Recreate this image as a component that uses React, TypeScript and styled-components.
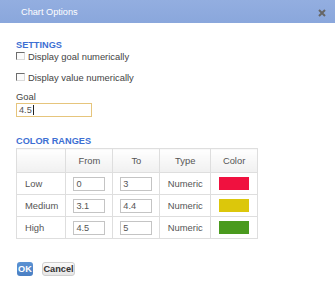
import React from 'react';
import styled, { createGlobalStyle } from 'styled-components';

const GlobalStyle = createGlobalStyle`
  html, body {
    margin: 0;
    padding: 0;
    background: #ffffff;
  }
  body {
    font-family: "Liberation Sans", Arial, sans-serif;
  }
`;

const Dialog = styled.div`
  width: 335px;
  height: 306px;
  background: #ffffff;
  display: flex;
  flex-direction: column;
  overflow: hidden;
`;

const TitleBar = styled.div`
  height: 23px;
  background: linear-gradient(#93aee0, #8aa7dc);
  display: flex;
  align-items: center;
  justify-content: space-between;
  padding: 0 9px 0 21px;
  color: #ffffff;
  font-size: 9.2px;
`;

const CloseBtn = styled.svg`
  width: 8px;
  height: 8px;
  margin-top: 2px;
`;

const Body = styled.div`
  padding: 16px 16px 0 16px;
  display: flex;
  flex-direction: column;
  align-items: flex-start;
`;

const SectionTitle = styled.div<{ $top?: number }>`
  margin-top: ${(p) => p.$top ?? 0}px;
  font-size: 9.2px;
  font-weight: bold;
  line-height: 12px;
  color: #3d6fd3;
`;

const CheckRow = styled.label<{ $top?: number }>`
  margin-top: ${(p) => p.$top ?? 0}px;
  display: flex;
  align-items: center;
  gap: 3px;
  height: 12px;
  font-size: 9.4px;
  color: #444;
`;

const Check = styled.span`
  width: 9px;
  height: 8px;
  box-sizing: border-box;
  border-top: 1px solid #6d6d6d;
  border-left: 1px solid #6d6d6d;
  border-right: 1px solid #dadada;
  border-bottom: 1px solid #dadada;
  background: #fbfbfb;
  margin-top: -1px;
`;

const Label = styled.div`
  margin-top: 8px;
  font-size: 9.4px;
  line-height: 12px;
  color: #444;
`;

const TextBox = styled.div<{ $w: number; $focus?: boolean }>`
  width: ${(p) => p.$w}px;
  height: 14px;
  box-sizing: border-box;
  border: 1px solid ${(p) => (p.$focus ? '#e6c57c' : '#c4c4c4')};
  padding-left: 2px;
  font-size: 9.2px;
  line-height: 12px;
  color: #555;
  text-align: left;
  display: flex;
  align-items: center;
  background: #fff;
`;

const Caret = styled.span`
  display: inline-block;
  width: 1px;
  height: 10px;
  background: #222;
  margin-left: 1px;
`;

const Table = styled.table`
  margin-top: 1px;
  border-collapse: collapse;
  width: 242px;
  font-size: 9.4px;
  color: #555;
`;

const Th = styled.th<{ $w: number }>`
  width: ${(p) => p.$w}px;
  height: 23px;
  padding: 0;
  border: 1px solid #dedede;
  background: linear-gradient(#ffffff, #f0f0f0);
  font-weight: normal;
  text-align: center;
`;

const Td = styled.td<{ $left?: boolean }>`
  height: 21px;
  padding: 0 0 0 ${(p) => (p.$left ? 8 : 0)}px;
  border: 1px solid #dedede;
  text-align: ${(p) => (p.$left ? 'left' : 'center')};
  vertical-align: middle;
`;

const CellInner = styled.div`
  display: flex;
  justify-content: center;
`;

const Swatch = styled.div<{ $c: string }>`
  width: 30px;
  height: 13px;
  margin: 0 auto;
  background: ${(p) => p.$c};
`;

const Buttons = styled.div`
  margin-top: 23px;
  display: flex;
  gap: 9px;
  padding-left: 1px;
`;

const OkButton = styled.button`
  width: 16px;
  height: 14px;
  padding: 0;
  border: none;
  border-radius: 3px;
  background: linear-gradient(#5b92d3, #4a7fc3);
  color: #fff;
  font-family: "Liberation Sans", Arial, sans-serif;
  font-weight: bold;
  font-size: 9.2px;
`;

const CancelButton = styled.button`
  width: 33px;
  height: 14px;
  padding: 0;
  border: 1px solid #cfcfcf;
  border-radius: 3px;
  background: linear-gradient(#fafafa, #e6e6e6);
  color: #333;
  font-family: "Liberation Sans", Arial, sans-serif;
  font-weight: bold;
  font-size: 9.2px;
`;

const ranges = [
  { name: 'Low', from: '0', to: '3', color: '#f0113f' },
  { name: 'Medium', from: '3.1', to: '4.4', color: '#dcc70b' },
  { name: 'High', from: '4.5', to: '5', color: '#4a9a1e' },
];

export default function App() {
  return (
    <>
      <GlobalStyle />
      <Dialog>
        <TitleBar>
          <span>Chart Options</span>
          <CloseBtn viewBox="0 0 8 8">
            <path d="M1 1 L7 7 M7 1 L1 7" stroke="#666" strokeWidth="2" />
          </CloseBtn>
        </TitleBar>
        <Body>
          <SectionTitle>SETTINGS</SectionTitle>
          <CheckRow $top={-1}>
            <Check />
            Display goal numerically
          </CheckRow>
          <CheckRow $top={9}>
            <Check />
            Display value numerically
          </CheckRow>
          <Label>Goal</Label>
          <TextBox $w={76} $focus>
            4.5
            <Caret />
          </TextBox>
          <SectionTitle $top={18}>COLOR RANGES</SectionTitle>
          <Table>
            <thead>
              <tr>
                <Th $w={49}></Th>
                <Th $w={47}>From</Th>
                <Th $w={47}>To</Th>
                <Th $w={51}>Type</Th>
                <Th $w={47}>Color</Th>
              </tr>
            </thead>
            <tbody>
              {ranges.map((r) => (
                <tr key={r.name}>
                  <Td $left>{r.name}</Td>
                  <Td>
                    <CellInner>
                      <TextBox $w={32}>{r.from}</TextBox>
                    </CellInner>
                  </Td>
                  <Td>
                    <CellInner>
                      <TextBox $w={32}>{r.to}</TextBox>
                    </CellInner>
                  </Td>
                  <Td>Numeric</Td>
                  <Td>
                    <Swatch $c={r.color} />
                  </Td>
                </tr>
              ))}
            </tbody>
          </Table>
          <Buttons>
            <OkButton>OK</OkButton>
            <CancelButton>Cancel</CancelButton>
          </Buttons>
        </Body>
      </Dialog>
    </>
  );
}
